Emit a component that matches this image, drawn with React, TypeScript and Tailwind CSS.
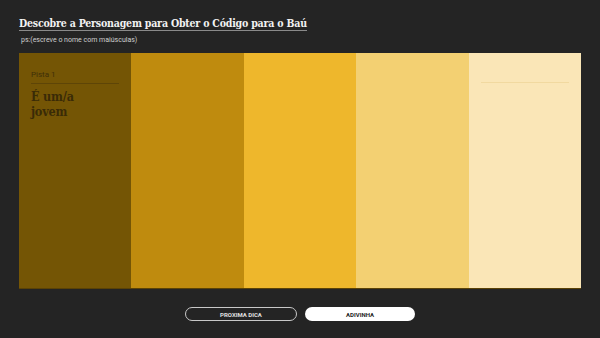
export default function App() {
  const cols = ["#745505", "#bf8b0e", "#eeb72c", "#f3d072", "#fae6b7"];
  const slab = { fontFamily: "'DejaVu Serif', serif", fontStretch: "condensed" as const };
  return (
    <div className="w-[600px] h-[338px] bg-[#242424] overflow-hidden flex flex-col" style={{ fontFamily: "Roboto, 'Liberation Sans', sans-serif" }}>
      <div className="pl-[19px] pt-[16px] flex flex-col items-start">
        <h1 className="text-[10.5px] leading-[14px] font-bold text-[#f2f2f2] tracking-[-0.2px] border-b border-[#8a8a8a]" style={slab}>
          Descobre a Personagem para Obter o Código para o Baú
        </h1>
        <p className="text-[7px] leading-[9px] text-[#cfcfcf] mt-[5px] pl-[2px]">ps:(escreve o nome com maiúsculas)</p>
      </div>
      <div className="mx-[19px] mt-[8px] h-[236px] flex border-b border-[#5a4206]">
        {cols.map((c, i) => (
          <div key={i} className="flex-1 h-full" style={{ backgroundColor: c }}>
            {i === 0 && (
              <div className="pl-[12px] pr-[12px] pt-[17px]">
                <div className="text-[8px] leading-[10px] text-[#3f2f08]">Pista 1</div>
                <div className="mt-[3px] border-t border-[#5e4507]" />
                <div className="mt-[5px] text-[12.5px] leading-[15px] font-bold text-[#3a2b07] tracking-[-0.2px]" style={slab}>
                  É um/a<br />jovem
                </div>
              </div>
            )}
            {i === 4 && (
              <div className="px-[12px] pt-[29px]">
                <div className="border-t border-[#f1d9a0]" />
              </div>
            )}
          </div>
        ))}
      </div>
      <div className="flex justify-center gap-[8px] mt-[18px]">
        <button className="w-[112px] h-[14px] rounded-full border border-[#c8c8c8] text-[6px] font-bold text-[#e0e0e0] flex items-center justify-center">PROXIMA DICA</button>
        <button className="w-[110px] h-[14px] rounded-full bg-white text-[6px] font-bold text-[#222222] flex items-center justify-center">ADIVINHA</button>
      </div>
    </div>
  );
}
